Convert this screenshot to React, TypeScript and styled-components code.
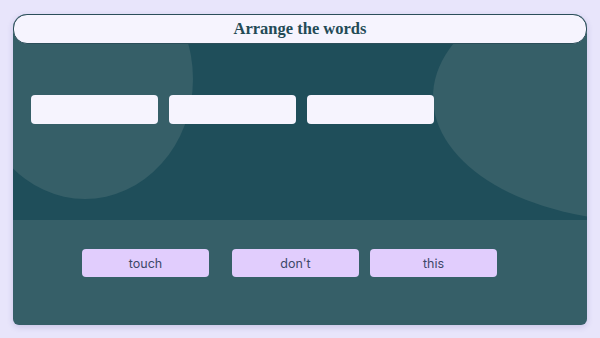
import React from 'react';
import styled, { createGlobalStyle } from 'styled-components';

const GlobalStyle = createGlobalStyle`
  html, body {
    margin: 0;
    padding: 0;
    background: #e8e5fb;
  }
  * {
    box-sizing: border-box;
  }
`;

const Page = styled.div`
  width: 600px;
  height: 338px;
  padding: 14px 13px 0;
`;

const Card = styled.div`
  width: 574px;
  height: 311px;
  display: flex;
  flex-direction: column;
  border-radius: 14px 14px 6px 6px;
  background: #365f68;
  box-shadow: 0 2px 6px rgba(60, 50, 140, 0.18);
  overflow: hidden;
`;

const Header = styled.div`
  height: 30px;
  flex-shrink: 0;
  display: flex;
  align-items: center;
  justify-content: center;
  background: #f6f4fe;
  border: 1px solid #2c4e5a;
  border-radius: 14px;
  position: relative;
  z-index: 2;
  margin-bottom: -1px;
`;

const Title = styled.h1`
  margin: 0;
  font-family: 'Liberation Serif', 'DejaVu Serif', serif;
  font-weight: 700;
  font-size: 16.5px;
  color: #234a56;
`;

const Board = styled.div`
  position: relative;
  height: 177px;
  flex-shrink: 0;
  background: #1f4e5a;
  overflow: hidden;
  padding: 52px 0 0 18px;
`;

const Blob = styled.div<{ $left: number; $top: number; $w: number; $h: number }>`
  position: absolute;
  left: ${({ $left }) => $left}px;
  top: ${({ $top }) => $top}px;
  width: ${({ $w }) => $w}px;
  height: ${({ $h }) => $h}px;
  border-radius: 50%;
  background: #365f68;
`;

const Slots = styled.div`
  position: relative;
  z-index: 1;
  display: flex;
  gap: 11px;
`;

const Slot = styled.div`
  width: 127px;
  height: 29px;
  border-radius: 4px;
  background: #f6f4fe;
`;

const Tray = styled.div`
  flex: 1;
  display: flex;
  align-items: flex-start;
  gap: 11px;
  padding: 29px 0 0 69px;
`;

const Word = styled.button<{ $spaced?: boolean }>`
  width: 127px;
  height: 28px;
  margin-right: ${({ $spaced }) => ($spaced ? 12 : 0)}px;
  border: none;
  border-radius: 4px;
  background: #e1cdfd;
  color: #3d4868;
  font-family: Inter, 'Noto Sans', sans-serif;
  font-size: 12.5px;
  font-weight: 400;
  cursor: pointer;
  padding: 0;
`;

const words = ['touch', "don't", 'this'];

export default function App() {
  return (
    <>
      <GlobalStyle />
      <Page>
        <Card>
          <Header>
            <Title>Arrange the words</Title>
          </Header>
          <Board>
            <Blob $left={-36} $top={-84} $w={216} $h={240} />
            <Blob $left={420} $top={-70} $w={420} $h={248} />
            <Slots>
              <Slot />
              <Slot />
              <Slot />
            </Slots>
          </Board>
          <Tray>
            {words.map((w, i) => (
              <Word key={w} $spaced={i === 0}>
                {w}
              </Word>
            ))}
          </Tray>
        </Card>
      </Page>
    </>
  );
}
